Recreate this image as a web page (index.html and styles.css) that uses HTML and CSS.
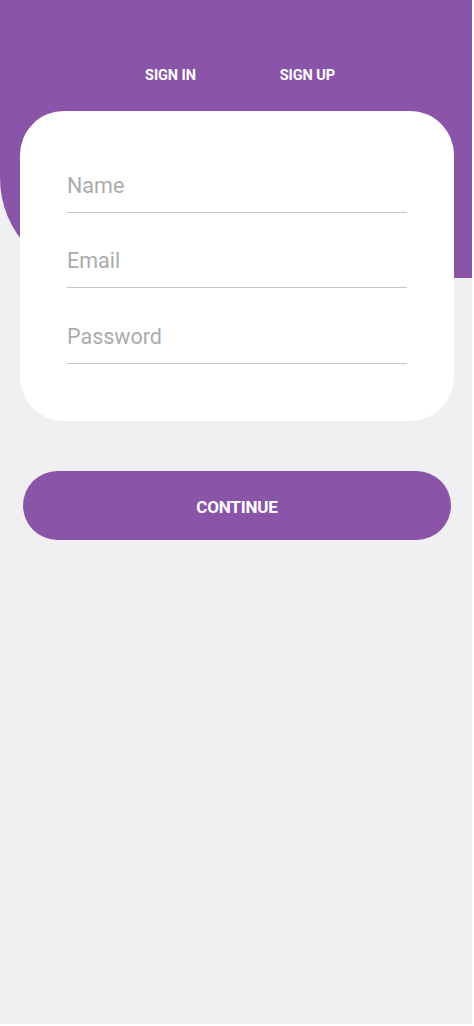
FILE: index.html
```html
<!DOCTYPE html>
<html lang="en">
<head>
<meta charset="utf-8">
<title>Sign up</title>
<link rel="stylesheet" href="styles.css">
</head>
<body>
<div class="app">
  <header class="header">
    <nav class="tabs">
      <span class="tab">SIGN IN</span>
      <span class="tab">SIGN UP</span>
    </nav>
  </header>
  <form class="card">
    <div class="field"><input class="input" type="text" placeholder="Name"></div>
    <div class="field"><input class="input" type="email" placeholder="Email"></div>
    <div class="field"><input class="input" type="password" placeholder="Password"></div>
  </form>
  <button class="continue" type="button">CONTINUE</button>
</div>
</body>
</html>
```
FILE: styles.css
```css
html, body {
  margin: 0;
  padding: 0;
  background: #ffffff;
}
body {
  font-family: Roboto, "Liberation Sans", Arial, sans-serif;
}
.app {
  width: 472px;
  height: 1024px;
  background: #f0f0f2;
  overflow: hidden;
}
.header {
  height: 278px;
  box-sizing: border-box;
  padding-top: 66px;
  background: #8a55a9;
  border-bottom-left-radius: 100px;
}
.tabs {
  display: flex;
  justify-content: center;
  gap: 84px;
  padding-left: 8px;
}
.tab {
  color: #ffffff;
  font-weight: 700;
  font-size: 14.5px;
  line-height: 20px;
  letter-spacing: -0.1px;
}
.card {
  margin: -167px 18px 0 20px;
  height: 310px;
  box-sizing: border-box;
  padding: 26px 47px 0;
  background: #ffffff;
  border-radius: 44px;
}
.field {
  padding: 36.5px 0 14px;
  border-bottom: 1px solid #c6c6c6;
}
.input {
  display: block;
  width: 100%;
  margin: 0;
  padding: 0;
  border: 0;
  outline: none;
  background: transparent;
  font-family: Roboto, "Liberation Sans", Arial, sans-serif;
  font-size: 21.5px;
  line-height: 24px;
  height: 24px;
  color: #555;
}
.input::placeholder {
  color: #ababab;
}
.continue {
  display: block;
  width: 428px;
  height: 69px;
  margin: 50px 0 0 23px;
  padding: 2px 0 0;
  border: 0;
  border-radius: 35px;
  background: #8a55a9;
  color: #ffffff;
  font-family: Roboto, "Liberation Sans", Arial, sans-serif;
  font-weight: 700;
  font-size: 17px;
  letter-spacing: -0.2px;
}
```
